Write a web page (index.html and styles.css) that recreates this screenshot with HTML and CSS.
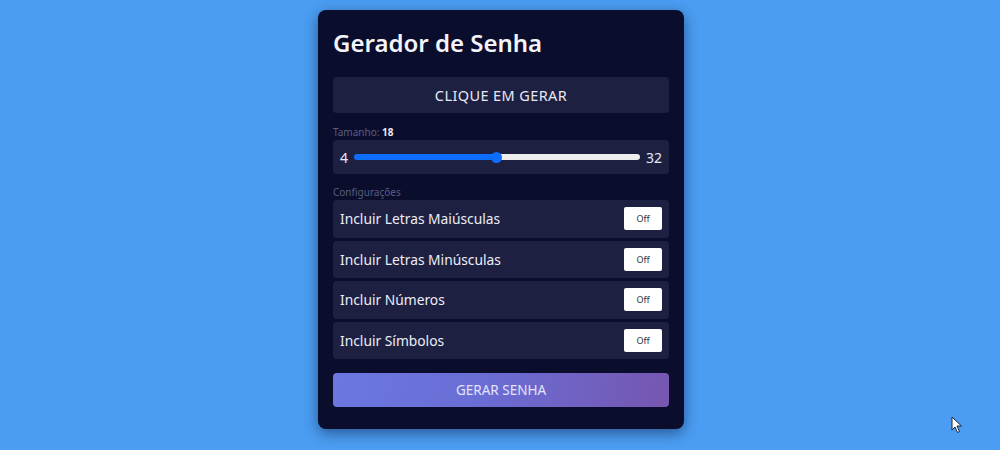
FILE: index.html
```html
<!DOCTYPE html>
<html lang="pt-BR">
<head>
<meta charset="utf-8">
<title>Gerador de Senha</title>
<link rel="stylesheet" href="styles.css">
</head>
<body>
<main class="card">
  <h1 class="title">Gerador de Senha</h1>
  <div class="display">CLIQUE EM GERAR</div>
  <div class="label">Tamanho: <strong>18</strong></div>
  <div class="slider-box">
    <span class="num">4</span>
    <input class="range" type="range" min="4" max="32" value="18">
    <span class="num">32</span>
  </div>
  <div class="label label-config">Configurações</div>
  <div class="options">
    <div class="option"><span>Incluir Letras Maiúsculas</span><button class="toggle">Off</button></div>
    <div class="option"><span>Incluir Letras Minúsculas</span><button class="toggle">Off</button></div>
    <div class="option"><span>Incluir Números</span><button class="toggle">Off</button></div>
    <div class="option"><span>Incluir Símbolos</span><button class="toggle">Off</button></div>
  </div>
  <button class="generate">GERAR SENHA</button>
</main>
<svg class="cursor" width="12" height="18" viewBox="0 0 12 18"><path d="M1 1 L1 14 L4 11 L6.5 16.5 L8.5 15.5 L6 10 L10.5 10 Z" fill="#fff" stroke="#1a2440" stroke-width="1"/></svg>
</body>
</html>
```
FILE: styles.css
```css
* { box-sizing: border-box; }
html, body { margin: 0; padding: 0; }
body {
  background: #4a9df2;
  width: 1000px;
  height: 450px;
  overflow: hidden;
  font-family: "Noto Sans", "Open Sans", sans-serif;
  display: flex;
  justify-content: center;
  align-items: flex-start;
  position: relative;
}
.card {
  margin: 10px 0 0 2px;
  width: 366px;
  background: #0b0d2d;
  border-radius: 8px;
  padding: 15px 15px 22px;
  box-shadow: 0 4px 14px rgba(0, 0, 30, 0.45);
  color: #fff;
}
.title {
  margin: 0 0 16px;
  font-size: 24px;
  font-weight: 600;
  line-height: 36px;
  color: #f4f4fa;
}
.display {
  height: 36px;
  background: #1e2042;
  border-radius: 4px;
  display: flex;
  align-items: center;
  justify-content: center;
  font-size: 14.5px;
  letter-spacing: 0.4px;
  color: #e6e8f4;
}
.label {
  margin-top: 12px;
  font-size: 10px;
  line-height: 14px;
  color: #5a5e7e;
}
.label strong { color: #e6e8f4; font-weight: 700; }
.label-config { margin-top: 12px; line-height: 12px; }
.slider-box {
  margin-top: 1px;
  height: 34px;
  background: #1e2042;
  border-radius: 4px;
  display: flex;
  align-items: center;
  padding: 0 7px;
  gap: 6px;
}
.num { font-size: 14px; color: #e6e8f4; }
.range {
  -webkit-appearance: none;
  appearance: none;
  flex: 1;
  height: 6px;
  margin: 0;
  border-radius: 3px;
  background: linear-gradient(to right, #0d6efd 0%, #0d6efd 50%, #eeeeee 50%, #eeeeee 100%);
  outline: none;
}
.range::-webkit-slider-thumb {
  -webkit-appearance: none;
  appearance: none;
  width: 11px;
  height: 11px;
  border-radius: 50%;
  background: #0d6efd;
  border: none;
}
.options {
  margin-top: 2px;
  display: flex;
  flex-direction: column;
  gap: 3px;
}
.option {
  height: 37.5px;
  background: #1e2042;
  border-radius: 4px;
  display: flex;
  align-items: center;
  justify-content: space-between;
  padding: 0 7px;
  font-size: 13.8px;
  color: #eceef8;
}
.toggle {
  width: 38px;
  height: 23px;
  border: none;
  border-radius: 2px;
  background: #ffffff;
  color: #333;
  font-family: "Noto Sans", sans-serif;
  font-size: 9px;
  padding: 0;
}
.generate {
  margin-top: 14px;
  width: 100%;
  height: 34px;
  border: none;
  border-radius: 4px;
  background: linear-gradient(100deg, #6b78e0 0%, #6a6dd4 45%, #7656b0 100%);
  color: #e2e4fa;
  font-family: "Noto Sans", sans-serif;
  font-size: 13.5px;
  letter-spacing: 0;
}
.cursor {
  position: absolute;
  left: 951px;
  top: 416px;
}
```
